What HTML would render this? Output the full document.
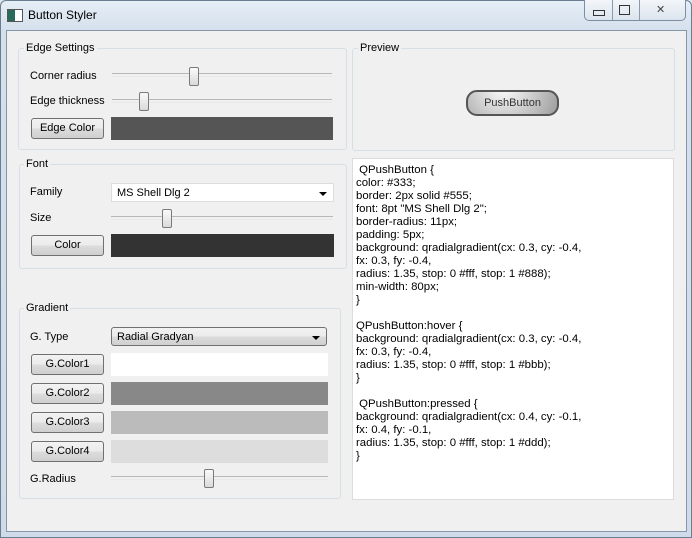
<!DOCTYPE html><html><head><style>
body{margin:0;width:692px;height:538px;overflow:hidden;background:#dfe8f1;font-family:"Liberation Sans",sans-serif;font-size:11px;color:#000;position:relative}
.a{position:absolute}
.frame{left:0;top:0;width:690px;height:536px;border:1px solid #6b7d91;border-radius:6px 6px 0 0;background:linear-gradient(180deg,#e6eef6,#d4e0ec 30px,#cfdbe8)}
.client{left:6px;top:30px;width:679px;height:500px;background:#f0f0f0;border:1px solid #8596a9}
.grp{position:absolute;border:1px solid #d5dfe5;border-radius:3px}
.gt{position:absolute;background:#f0f0f0;padding:0 2px;font-size:11px}
.lbl{position:absolute;font-size:11px}
.sl{position:absolute;height:2px;border-top:1px solid #b8b8b8;border-bottom:1px solid #e8e8e8}
.th{position:absolute;width:8px;height:17px;border:1px solid #7a7a7a;border-radius:2px;background:linear-gradient(#fafafa,#dadada)}
.btn{position:absolute;height:19px;border:1px solid #707070;border-radius:3px;background:linear-gradient(#f2f2f2 0,#ebebeb 50%,#dddddd 50%,#cfcfcf);text-align:center;line-height:19px;font-size:11px}
.sw{position:absolute}
.combo{position:absolute;height:19px;border:1px solid #acacac;background:#fff;line-height:19px;padding-left:5px;box-sizing:border-box;font-size:11px}
.arr{position:absolute;right:6px;top:8px;width:0;height:0;border-left:4px solid transparent;border-right:4px solid transparent;border-top:4px solid #000}
pre{margin:0;font-family:"Liberation Sans",sans-serif;font-size:11.4px;line-height:13px}
</style></head><body>
<div class="a frame"></div>
<div class="a" style="left:7px;top:9px;width:14px;height:11px;border:1px solid #555;background:linear-gradient(90deg,#2a6a5a 50%,#fff 50%)"></div>
<div class="a" style="left:28px;top:8px;font-size:12px">Button Styler</div>
<div class="a" style="left:584px;top:0;width:100px;height:20px;border:1px solid #7b8ea3;border-top:none;border-radius:0 0 5px 5px;background:linear-gradient(#f3f6fa,#dbe4ee)"></div>
<div class="a" style="left:612px;top:0;width:1px;height:20px;background:#8a9bb0"></div>
<div class="a" style="left:639px;top:0;width:1px;height:20px;background:#8a9bb0"></div>
<div class="a" style="left:593px;top:10px;width:10px;height:4px;border:1px solid #333"></div>
<div class="a" style="left:619px;top:5px;width:9px;height:8px;border:1px solid #333"></div>
<div class="a" style="left:656px;top:3px;font-size:11px;color:#444">✕</div>
<div class="a client"></div>

<div class="grp" style="left:18px;top:48px;width:327px;height:100px"></div>
<div class="gt" style="left:24px;top:42px">Edge Settings</div>
<div class="lbl" style="left:30px;top:70px">Corner radius</div>
<div class="sl" style="left:112px;top:73px;width:220px"></div>
<div class="th" style="left:189px;top:67px"></div>
<div class="lbl" style="left:30px;top:95px">Edge thickness</div>
<div class="sl" style="left:112px;top:99px;width:220px"></div>
<div class="th" style="left:139px;top:92px"></div>
<div class="btn" style="left:31px;top:118px;width:71px">Edge Color</div>
<div class="sw" style="left:111px;top:117px;width:222px;height:23px;background:#555"></div>

<div class="grp" style="left:352px;top:48px;width:321px;height:101px"></div>
<div class="gt" style="left:358px;top:42px">Preview</div>
<div class="a" style="left:466px;top:90px;width:89px;height:22px;border:2px solid #555;border-radius:11px;background:radial-gradient(circle at 40% -30%,#fff,#888 120%);text-align:center;line-height:22px;color:#333;font-size:11px">PushButton</div>

<div class="grp" style="left:19px;top:164px;width:326px;height:103px"></div>
<div class="gt" style="left:24px;top:158px">Font</div>
<div class="lbl" style="left:30px;top:186px">Family</div>
<div class="combo" style="left:111px;top:183px;width:223px;border-color:#ddd">MS Shell Dlg 2<div class="arr"></div></div>
<div class="lbl" style="left:30px;top:212px">Size</div>
<div class="sl" style="left:111px;top:216px;width:222px"></div>
<div class="th" style="left:162px;top:209px"></div>
<div class="btn" style="left:31px;top:235px;width:71px">Color</div>
<div class="sw" style="left:111px;top:234px;width:223px;height:23px;background:#333"></div>

<div class="grp" style="left:19px;top:308px;width:320px;height:189px"></div>
<div class="gt" style="left:24px;top:302px">Gradient</div>
<div class="lbl" style="left:30px;top:331px">G. Type</div>
<div class="combo" style="left:111px;top:327px;width:216px;border-color:#707070;border-radius:3px;background:linear-gradient(#f2f2f2,#ebebeb 50%,#dcdcdc 50%,#d0d0d0)">Radial Gradyan<div class="arr"></div></div>
<div class="btn" style="left:31px;top:354px;width:71px">G.Color1</div>
<div class="sw" style="left:111px;top:353px;width:217px;height:23px;background:#fff"></div>
<div class="btn" style="left:31px;top:383px;width:71px">G.Color2</div>
<div class="sw" style="left:111px;top:382px;width:217px;height:23px;background:#888"></div>
<div class="btn" style="left:31px;top:412px;width:71px">G.Color3</div>
<div class="sw" style="left:111px;top:411px;width:217px;height:23px;background:#bbb"></div>
<div class="btn" style="left:31px;top:441px;width:71px">G.Color4</div>
<div class="sw" style="left:111px;top:440px;width:217px;height:23px;background:#ddd"></div>
<div class="lbl" style="left:30px;top:473px">G.Radius</div>
<div class="sl" style="left:111px;top:476px;width:217px"></div>
<div class="th" style="left:204px;top:469px"></div>

<div class="a" style="left:352px;top:158px;width:320px;height:340px;background:#fff;border:1px solid #dcdcdc"></div>
<pre class="a" style="left:356px;top:164px"> QPushButton {
color: #333;
border: 2px solid #555;
font: 8pt "MS Shell Dlg 2";
border-radius: 11px;
padding: 5px;
background: qradialgradient(cx: 0.3, cy: -0.4,
fx: 0.3, fy: -0.4,
radius: 1.35, stop: 0 #fff, stop: 1 #888);
min-width: 80px;
}

QPushButton:hover {
background: qradialgradient(cx: 0.3, cy: -0.4,
fx: 0.3, fy: -0.4,
radius: 1.35, stop: 0 #fff, stop: 1 #bbb);
}

 QPushButton:pressed {
background: qradialgradient(cx: 0.4, cy: -0.1,
fx: 0.4, fy: -0.1,
radius: 1.35, stop: 0 #fff, stop: 1 #ddd);
}</pre>
</body></html>
